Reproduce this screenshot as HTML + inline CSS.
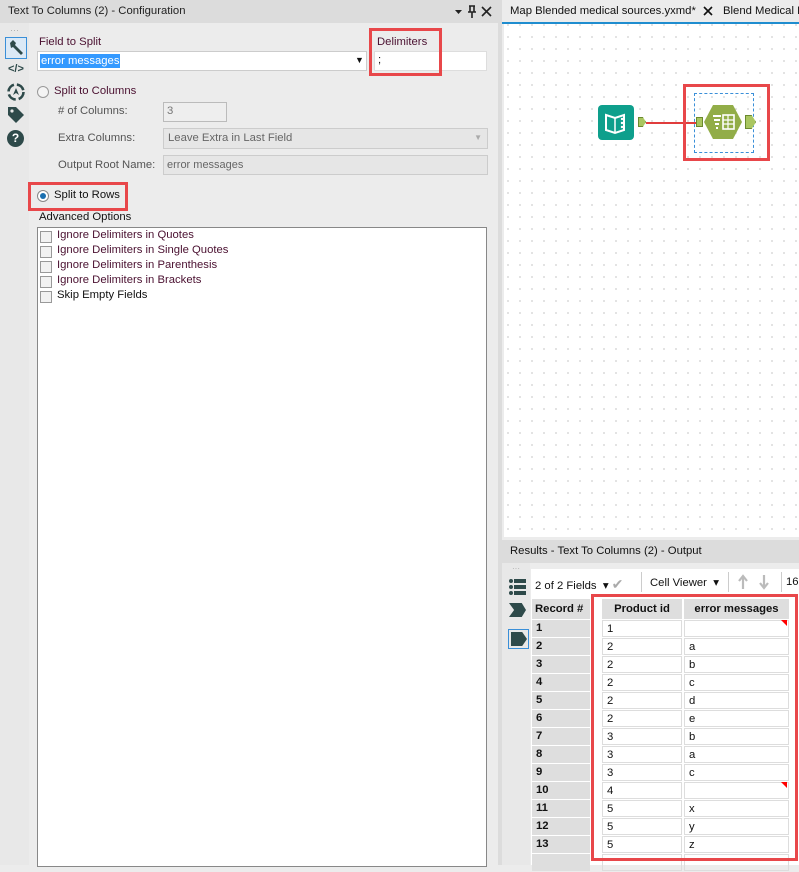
<!DOCTYPE html>
<html><head><style>
*{box-sizing:border-box;margin:0;padding:0}
body{width:799px;height:865px;overflow:hidden;background:#ececec;font-family:"Liberation Sans",sans-serif;font-size:11.3px;color:#111;position:relative}
.a{position:absolute}
.red{position:absolute;border:3px solid #e8474a}
.chk{position:absolute;width:12px;height:12px;border:1px solid #999;background:#f2f2f2}
.lbl{position:absolute;color:#4a1030;white-space:nowrap}
.row{position:absolute;left:531px;height:18px;width:260px}
.row div{position:absolute;top:0;height:17px;line-height:17px;padding-left:4px}
</style></head><body>
<div class="a" style="left:0;top:0;width:498px;height:23px;background:#dcdcdc"></div>
<div class="a" style="left:8px;top:5px;color:#222">Text To Columns (2) - Configuration</div>
<svg class="a" style="left:452px;top:5px" width="44" height="14" viewBox="0 0 44 14">
<path d="M3 5h7l-3.5 4z" fill="#222"/>
<path d="M17 1h6M18 1v6h4V1M16 7h8M20 7v6" stroke="#222" stroke-width="1.6" fill="none"/>
<path d="M30 2l9 9M39 2l-9 9" stroke="#222" stroke-width="1.6"/>
</svg>
<div class="a" style="left:0;top:23px;width:29px;height:842px;background:#e8e8e8"></div>
<div class="a" style="left:10px;top:25px;color:#aaa;font-size:9px">···</div>
<div class="a" style="left:5px;top:37px;width:22px;height:22px;border:1px solid #3a8fd8;background:#dbe9f6"></div>
<svg class="a" style="left:7px;top:39px" width="18" height="18" viewBox="0 0 18 18"><path d="M3 4l3-3 3 3-1 2 8 8-2 2-8-8-2 1z" fill="#2e4a4a"/></svg>
<div class="a" style="left:8px;top:63px;font-weight:bold;color:#2e4a4a;font-size:11px">&lt;/&gt;</div>
<svg class="a" style="left:6px;top:82px" width="20" height="20" viewBox="0 0 20 20"><circle cx="10" cy="10" r="7.5" stroke="#2e4a4a" stroke-width="2.6" fill="none" stroke-dasharray="9 3"/><path d="M7 13l3-7 3 7-3-2z" fill="#2e4a4a"/></svg>
<svg class="a" style="left:6px;top:105px" width="20" height="20" viewBox="0 0 20 20"><path d="M2 2h8l8 8-8 8-8-8z" fill="#2e4a4a"/><circle cx="6" cy="6" r="1.6" fill="#e8e8e8"/></svg>
<div class="a" style="left:7px;top:130px;width:17px;height:17px;background:#2e4a4a;border-radius:50%;color:#fff;font-weight:bold;text-align:center;line-height:17px;font-size:12px">?</div>

<div class="lbl" style="left:39px;top:36px">Field to Split</div>
<div class="a" style="left:37px;top:51px;width:330px;height:20px;background:#fff;border:1px solid #ccc"></div>
<div class="a" style="left:40px;top:54px;background:#3399ff;color:#fff;padding:0 1px;line-height:14px">error messages</div>
<div class="a" style="left:355px;top:55px;font-size:9px">▼</div>
<div class="lbl" style="left:377px;top:36px">Delimiters</div>
<div class="a" style="left:374px;top:51px;width:113px;height:20px;background:#fff;border:1px solid #ddd"></div>
<div class="a" style="left:378px;top:54px">;</div>
<div class="red" style="left:369px;top:28px;width:73px;height:48px"></div>

<div class="a" style="left:37px;top:86px;width:12px;height:12px;border:1px solid #999;border-radius:50%;background:#f4f4f4"></div>
<div class="lbl" style="left:54px;top:85px">Split to Columns</div>
<div class="a" style="left:58px;top:105px;color:#555"># of Columns:</div>
<div class="a" style="left:163px;top:102px;width:64px;height:20px;border:1px solid #bbb;background:#eee;color:#777;padding:2px 3px">3</div>
<div class="a" style="left:58px;top:132px;color:#555">Extra Columns:</div>
<div class="a" style="left:163px;top:128px;width:325px;height:21px;border:1px solid #ccc;background:#e6e6e6;color:#666;padding:3px 4px">Leave Extra in Last Field<span style="position:absolute;right:5px;top:4px;font-size:8px;color:#aaa">▼</span></div>
<div class="a" style="left:58px;top:159px;color:#555">Output Root Name:</div>
<div class="a" style="left:163px;top:155px;width:325px;height:20px;border:1px solid #ccc;background:#e6e6e6;color:#666;padding:3px 3px;font-size:11px">error messages</div>

<div class="a" style="left:37px;top:190px;width:12px;height:12px;border:1px solid #888;border-radius:50%;background:#fff"><div class="a" style="left:2px;top:2px;width:6px;height:6px;border-radius:50%;background:#1a6fb0"></div></div>
<div class="a" style="left:54px;top:189px">Split to Rows</div>
<div class="red" style="left:28px;top:182px;width:100px;height:29px"></div>
<div class="a" style="left:39px;top:211px">Advanced Options</div>
<div class="a" style="left:37px;top:227px;width:450px;height:640px;background:#fff;border:1px solid #888"></div>
<div class="chk" style="left:40px;top:231px"></div><div class="lbl" style="left:57px;top:229px">Ignore Delimiters in Quotes</div>
<div class="chk" style="left:40px;top:246px"></div><div class="lbl" style="left:57px;top:244px">Ignore Delimiters in Single Quotes</div>
<div class="chk" style="left:40px;top:261px"></div><div class="lbl" style="left:57px;top:259px">Ignore Delimiters in Parenthesis</div>
<div class="chk" style="left:40px;top:276px"></div><div class="lbl" style="left:57px;top:274px">Ignore Delimiters in Brackets</div>
<div class="chk" style="left:40px;top:291px"></div><div class="a" style="left:57px;top:289px">Skip Empty Fields</div>
<div class="a" style="left:498px;top:0;width:4px;height:865px;background:#dcdcdc"></div>

<div class="a" style="left:502px;top:0;width:297px;height:22px;background:#ececec"></div>
<div class="a" style="left:510px;top:5px;white-space:nowrap">Map Blended medical sources.yxmd*</div>
<svg class="a" style="left:703px;top:6px" width="10" height="10"><path d="M1 1l8 8M9 1l-8 8" stroke="#111" stroke-width="1.6"/></svg>
<div class="a" style="left:723px;top:5px;white-space:nowrap">Blend Medical D</div>
<div class="a" style="left:502px;top:22px;width:297px;height:2px;background:#1f8dcf"></div>
<div class="a" style="left:504px;top:24px;width:295px;height:513px;background:#fff;background-image:radial-gradient(#999 0.6px,transparent 0.8px);background-size:12px 12px;background-position:10px 7px"></div>
<div class="a" style="left:598px;top:105px;width:36px;height:35px;background:#0e9f8c;border-radius:4px"></div>
<svg class="a" style="left:598px;top:105px" width="36" height="35" viewBox="0 0 36 35"><path d="M8 10l9 3 9-3v15l-9 3-9-3z" stroke="#fff" stroke-width="2" fill="none"/><path d="M17 13v15" stroke="#fff" stroke-width="1.5"/><circle cx="24" cy="14" r="1.2" fill="#fff"/><circle cx="24" cy="18" r="1.2" fill="#fff"/><circle cx="24" cy="22" r="1.2" fill="#fff"/></svg>
<div class="a" style="left:638px;top:117px;width:8px;height:10px;background:#a9c660;border:1px solid #6b8a2e;clip-path:polygon(0 0,60% 0,100% 50%,60% 100%,0 100%)"></div>
<div class="a" style="left:646px;top:122px;width:50px;height:2px;background:#e03c3c"></div>
<div class="a" style="left:694px;top:93px;width:60px;height:60px;border:1px dashed #3a8fd8"></div>
<div class="a" style="left:696px;top:117px;width:7px;height:10px;background:#a9c660;border:1px solid #6b8a2e"></div>
<svg class="a" style="left:704px;top:104px" width="38" height="36" viewBox="0 0 38 36"><path d="M9 1h20l9 17-9 17H9L0 18z" fill="#92ad48"/><path d="M9 12h8M10 16h6M11 20h4M12 24h2" stroke="#fff" stroke-width="2"/><rect x="19" y="11" width="11" height="14" fill="none" stroke="#fff" stroke-width="1.6"/><path d="M19 16h11M19 20h11M24 11v14" stroke="#fff" stroke-width="1.2"/></svg>
<div class="a" style="left:745px;top:115px;width:11px;height:14px;background:#a9c660;border:1px solid #6b8a2e;clip-path:polygon(0 0,60% 0,100% 50%,60% 100%,0 100%)"></div>
<div class="red" style="left:683px;top:84px;width:87px;height:77px"></div>

<div class="a" style="left:502px;top:540px;width:297px;height:23px;background:#dcdcdc"></div>
<div class="a" style="left:510px;top:545px">Results - Text To Columns (2) - Output</div>
<div class="a" style="left:502px;top:563px;width:28px;height:302px;background:#e8e8e8"></div>
<div class="a" style="left:512px;top:564px;color:#aaa;font-size:8px">···</div>
<svg class="a" style="left:509px;top:578px" width="18" height="18" viewBox="0 0 18 18"><g fill="#2e4a4a"><circle cx="2" cy="3" r="2"/><circle cx="2" cy="9" r="2"/><circle cx="2" cy="15" r="2"/><rect x="5" y="1" width="12" height="4"/><rect x="5" y="7" width="12" height="4"/><rect x="5" y="13" width="12" height="4"/></g></svg>
<div class="a" style="left:509px;top:603px;width:17px;height:14px;background:#2e4a4a;clip-path:polygon(0 0,75% 0,100% 50%,75% 100%,0 100%,30% 50%)"></div>
<div class="a" style="left:508px;top:629px;width:21px;height:20px;border:1px solid #3a8fd8"></div>
<div class="a" style="left:511px;top:632px;width:16px;height:14px;background:#2e4a4a;clip-path:polygon(0 0,70% 0,100% 50%,70% 100%,0 100%)"></div>
<div class="a" style="left:531px;top:569px;width:268px;height:27px;background:#fff"></div>
<div class="a" style="left:535px;top:576px;white-space:nowrap">2 of 2 Fields &nbsp;▾ <span style="color:#aaa;font-size:14px">✔</span></div>
<div class="a" style="left:641px;top:572px;width:1px;height:20px;background:#ccc"></div>
<div class="a" style="left:650px;top:576px">Cell Viewer &nbsp;▾</div>
<div class="a" style="left:728px;top:572px;width:1px;height:20px;background:#ccc"></div>
<svg class="a" style="left:737px;top:573px" width="36" height="18"><path d="M6 16V4M2 8l4-5 4 5" stroke="#bbb" stroke-width="2.2" fill="none"/><path d="M27 2v12M23 10l4 5 4-5" stroke="#bbb" stroke-width="2.2" fill="none"/></svg>
<div class="a" style="left:781px;top:572px;width:1px;height:20px;background:#ccc"></div>
<div class="a" style="left:786px;top:576px">16</div>
<div class="a" style="left:531px;top:596px;width:268px;height:269px;background:#fff"></div>
<div class="a" style="left:532px;top:599px;width:58px;height:20px;background:#dedede;font-weight:bold;padding:4px 3px">Record #</div>
<div class="a" style="left:602px;top:599px;width:80px;height:20px;background:#dedede;font-weight:bold;text-align:center;padding-top:4px">Product id</div>
<div class="a" style="left:684px;top:599px;width:105px;height:20px;background:#dedede;font-weight:bold;text-align:center;padding-top:4px">error messages</div>
<div class="row" style="top:620px"><div style="left:1px;width:58px;background:#dedede;font-weight:bold">1</div><div style="left:71px;width:80px;border:1px solid #ddd">1</div><div style="left:153px;width:105px;border:1px solid #ddd"></div><div style="left:250px;width:0;height:0;padding:0;border-top:6px solid red;border-left:6px solid transparent"></div></div>
<div class="row" style="top:638px"><div style="left:1px;width:58px;background:#dedede;font-weight:bold">2</div><div style="left:71px;width:80px;border:1px solid #ddd">2</div><div style="left:153px;width:105px;border:1px solid #ddd">a</div></div>
<div class="row" style="top:656px"><div style="left:1px;width:58px;background:#dedede;font-weight:bold">3</div><div style="left:71px;width:80px;border:1px solid #ddd">2</div><div style="left:153px;width:105px;border:1px solid #ddd">b</div></div>
<div class="row" style="top:674px"><div style="left:1px;width:58px;background:#dedede;font-weight:bold">4</div><div style="left:71px;width:80px;border:1px solid #ddd">2</div><div style="left:153px;width:105px;border:1px solid #ddd">c</div></div>
<div class="row" style="top:692px"><div style="left:1px;width:58px;background:#dedede;font-weight:bold">5</div><div style="left:71px;width:80px;border:1px solid #ddd">2</div><div style="left:153px;width:105px;border:1px solid #ddd">d</div></div>
<div class="row" style="top:710px"><div style="left:1px;width:58px;background:#dedede;font-weight:bold">6</div><div style="left:71px;width:80px;border:1px solid #ddd">2</div><div style="left:153px;width:105px;border:1px solid #ddd">e</div></div>
<div class="row" style="top:728px"><div style="left:1px;width:58px;background:#dedede;font-weight:bold">7</div><div style="left:71px;width:80px;border:1px solid #ddd">3</div><div style="left:153px;width:105px;border:1px solid #ddd">b</div></div>
<div class="row" style="top:746px"><div style="left:1px;width:58px;background:#dedede;font-weight:bold">8</div><div style="left:71px;width:80px;border:1px solid #ddd">3</div><div style="left:153px;width:105px;border:1px solid #ddd">a</div></div>
<div class="row" style="top:764px"><div style="left:1px;width:58px;background:#dedede;font-weight:bold">9</div><div style="left:71px;width:80px;border:1px solid #ddd">3</div><div style="left:153px;width:105px;border:1px solid #ddd">c</div></div>
<div class="row" style="top:782px"><div style="left:1px;width:58px;background:#dedede;font-weight:bold">10</div><div style="left:71px;width:80px;border:1px solid #ddd">4</div><div style="left:153px;width:105px;border:1px solid #ddd"></div><div style="left:250px;width:0;height:0;padding:0;border-top:6px solid red;border-left:6px solid transparent"></div></div>
<div class="row" style="top:800px"><div style="left:1px;width:58px;background:#dedede;font-weight:bold">11</div><div style="left:71px;width:80px;border:1px solid #ddd">5</div><div style="left:153px;width:105px;border:1px solid #ddd">x</div></div>
<div class="row" style="top:818px"><div style="left:1px;width:58px;background:#dedede;font-weight:bold">12</div><div style="left:71px;width:80px;border:1px solid #ddd">5</div><div style="left:153px;width:105px;border:1px solid #ddd">y</div></div>
<div class="row" style="top:836px"><div style="left:1px;width:58px;background:#dedede;font-weight:bold">13</div><div style="left:71px;width:80px;border:1px solid #ddd">5</div><div style="left:153px;width:105px;border:1px solid #ddd">z</div></div>
<div class="row" style="top:854px"><div style="left:1px;width:58px;background:#dedede"></div><div style="left:71px;width:80px;border:1px solid #ddd"></div><div style="left:153px;width:105px;border:1px solid #ddd"></div></div>
<div class="red" style="left:591px;top:594px;width:207px;height:267px"></div>
</body></html>
